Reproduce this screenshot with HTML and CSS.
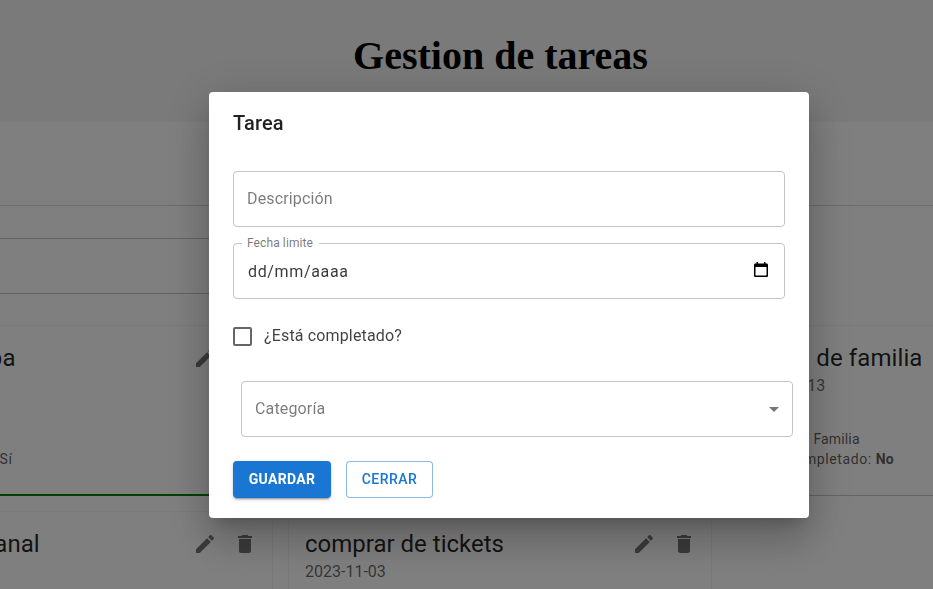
FILE: index.html
```html
<!DOCTYPE html>
<html lang="es">
<head>
<meta charset="utf-8">
<title>Gestion de tareas</title>
<link rel="stylesheet" href="styles.css">
</head>
<body>
<div class="page">
  <header class="top"><h1>Gestion de tareas</h1></header>
  <section class="filters"></section>
  <section class="filter-box"></section>
  <main class="grid">
    <article class="card card-done">
      <div class="card-head">
        <div><h2>Comprar ropa</h2><p class="date">2023-11-01</p></div>
        <div class="actions">
          <svg viewBox="0 0 24 24"><path d="M3 17.25V21h3.75L17.81 9.94l-3.75-3.75L3 17.25zM20.71 7.04c.39-.39.39-1.02 0-1.41l-2.34-2.34c-.39-.39-1.02-.39-1.41 0l-1.83 1.83 3.75 3.75 1.83-1.83z"/></svg>
          <svg viewBox="0 0 24 24"><path d="M6 19c0 1.1.9 2 2 2h8c1.1 0 2-.9 2-2V7H6v12zM19 4h-3.5l-1-1h-5l-1 1H5v2h14V4z"/></svg>
        </div>
      </div>
      <p class="meta">Categoría: Personal</p>
      <p class="meta meta-status">¿Está Completado: Sí</p>
    </article>
    <article class="card card-plain">
      <div class="card-head">
        <div><h2>comprar juguetes</h2><p class="date">2023-11-02</p></div>
        <div class="actions">
          <svg viewBox="0 0 24 24"><path d="M3 17.25V21h3.75L17.81 9.94l-3.75-3.75L3 17.25zM20.71 7.04c.39-.39.39-1.02 0-1.41l-2.34-2.34c-.39-.39-1.02-.39-1.41 0l-1.83 1.83 3.75 3.75 1.83-1.83z"/></svg>
          <svg viewBox="0 0 24 24"><path d="M6 19c0 1.1.9 2 2 2h8c1.1 0 2-.9 2-2V7H6v12zM19 4h-3.5l-1-1h-5l-1 1H5v2h14V4z"/></svg>
        </div>
      </div>
      <p class="meta">Categoría: Familia</p>
      <p class="meta meta-status">¿Está Completado: <b>No</b></p>
    </article>
    <article class="card card-plain">
      <div class="card-head">
        <div><h2>Fiesta de familia</h2><p class="date">2023-11-13</p></div>
        <div class="actions">
          <svg viewBox="0 0 24 24"><path d="M3 17.25V21h3.75L17.81 9.94l-3.75-3.75L3 17.25zM20.71 7.04c.39-.39.39-1.02 0-1.41l-2.34-2.34c-.39-.39-1.02-.39-1.41 0l-1.83 1.83 3.75 3.75 1.83-1.83z"/></svg>
          <svg viewBox="0 0 24 24"><path d="M6 19c0 1.1.9 2 2 2h8c1.1 0 2-.9 2-2V7H6v12zM19 4h-3.5l-1-1h-5l-1 1H5v2h14V4z"/></svg>
        </div>
      </div>
      <p class="meta">Categoría: Familia</p>
      <p class="meta meta-status">¿Está Completado: <b>No</b></p>
    </article>
    <article class="card">
      <div class="card-head">
        <div><h2>Cobros semanal</h2><p class="date">2023-11-03</p></div>
        <div class="actions">
          <svg viewBox="0 0 24 24"><path d="M3 17.25V21h3.75L17.81 9.94l-3.75-3.75L3 17.25zM20.71 7.04c.39-.39.39-1.02 0-1.41l-2.34-2.34c-.39-.39-1.02-.39-1.41 0l-1.83 1.83 3.75 3.75 1.83-1.83z"/></svg>
          <svg viewBox="0 0 24 24"><path d="M6 19c0 1.1.9 2 2 2h8c1.1 0 2-.9 2-2V7H6v12zM19 4h-3.5l-1-1h-5l-1 1H5v2h14V4z"/></svg>
        </div>
      </div>
    </article>
    <article class="card">
      <div class="card-head">
        <div><h2>comprar de tickets</h2><p class="date">2023-11-03</p></div>
        <div class="actions">
          <svg viewBox="0 0 24 24"><path d="M3 17.25V21h3.75L17.81 9.94l-3.75-3.75L3 17.25zM20.71 7.04c.39-.39.39-1.02 0-1.41l-2.34-2.34c-.39-.39-1.02-.39-1.41 0l-1.83 1.83 3.75 3.75 1.83-1.83z"/></svg>
          <svg viewBox="0 0 24 24"><path d="M6 19c0 1.1.9 2 2 2h8c1.1 0 2-.9 2-2V7H6v12zM19 4h-3.5l-1-1h-5l-1 1H5v2h14V4z"/></svg>
        </div>
      </div>
    </article>
  </main>
</div>

<div class="overlay">
  <div class="dialog" role="dialog">
    <h3 class="dialog-title">Tarea</h3>
    <div class="dialog-body">
      <div class="field"><span class="placeholder">Descripción</span></div>
      <div class="field field-date">
        <span class="legend">Fecha limite</span>
        <span class="value">dd/mm/aaaa</span>
        <svg class="calendar" viewBox="0.5 0 14 15"><path d="M3 0h1.5v1.5h6V0H12v1.5h1.2c.7 0 1.3.6 1.3 1.3v10.9c0 .7-.6 1.3-1.3 1.3H1.8c-.7 0-1.3-.6-1.3-1.3V2.8c0-.7.6-1.3 1.3-1.3H3V0zM2 5v8.5h11V5H2z"/></svg>
      </div>
      <label class="check"><span class="box"></span><span>¿Está completado?</span></label>
      <div class="field field-select">
        <span class="placeholder">Categoría</span>
        <span class="caret"></span>
      </div>
    </div>
    <div class="dialog-actions">
      <button class="btn btn-primary">GUARDAR</button>
      <button class="btn btn-outline">CERRAR</button>
    </div>
  </div>
</div>
</body>
</html>
```
FILE: styles.css
```css
html, body {
  margin: 0;
  height: 100%;
  overflow: hidden;
}
body {
  background: #fff;
  font-family: Roboto, "Liberation Sans", sans-serif;
}
.page {
  width: 1001px;
  height: 589px;
}
.top {
  height: 122px;
  background: #f4f4f4;
  display: flex;
  justify-content: center;
  padding-top: 33px;
  box-sizing: border-box;
}
.top h1 {
  margin: 0;
  font-family: "Liberation Serif", serif;
  font-size: 40px;
  line-height: 46px;
  font-weight: 700;
  color: #000;
}
.filters {
  height: 84px;
  box-sizing: border-box;
  border-bottom: 1px solid #d8d8d8;
  width: 933px;
}
.filter-box {
  margin-top: 32px;
  height: 56px;
  width: 700px;
  border-top: 1px solid #c4c4c4;
  border-bottom: 1px solid #c4c4c4;
  box-sizing: border-box;
}
.grid {
  margin-top: 31px;
  display: flex;
  flex-wrap: wrap;
  width: 1303px;
  margin-left: -151.5px;
  gap: 15px 15.5px;
}
.card {
  width: 424px;
  box-sizing: border-box;
  padding: 16px 7px 0 16px;
  height: 171px;
  border: 1px solid #f4f4f4;
  background: #fff;
}
.card-done { border-bottom: 2px solid #008000; }
.card-plain { border-bottom: 1px solid #c8c8c8; }
.card-done h2 { letter-spacing: .3px; }
.card-plain h2 { letter-spacing: .1px; }
.card-head {
  display: flex;
  justify-content: space-between;
  align-items: flex-start;
}
h2 {
  margin: 0;
  font-size: 24px;
  line-height: 32px;
  font-weight: 400;
  color: rgba(0,0,0,.87);
}
.date {
  margin: 0;
  font-size: 16px;
  line-height: 24px;
  color: rgba(0,0,0,.6);
}
.actions {
  display: flex;
  width: 80px;
  padding-top: 4px;
}
.actions svg {
  width: 24px;
  height: 24px;
  padding: 0 8px;
  fill: rgba(0,0,0,.54);
}
.meta {
  margin: 0;
  font-size: 14px;
  line-height: 20px;
  letter-spacing: .15px;
  color: rgba(0,0,0,.65);
}
.meta-status { letter-spacing: .6px; }
.card-done .meta-status { letter-spacing: .75px; }
.meta b { letter-spacing: .15px; }
.card-head + .meta { margin-top: 31px; }

.overlay {
  position: fixed;
  inset: 0;
  background: rgba(0,0,0,.5);
}
.dialog {
  position: absolute;
  left: 209px;
  top: 92px;
  width: 600px;
  height: 426px;
  box-sizing: border-box;
  background: #fff;
  border-radius: 4px;
  box-shadow: 0 11px 15px -7px rgba(0,0,0,.2), 0 24px 38px 3px rgba(0,0,0,.14), 0 9px 46px 8px rgba(0,0,0,.12);
}
.dialog-title {
  margin: 0;
  padding: 15px 24px 16px;
  font-size: 20px;
  line-height: 32px;
  font-weight: 500;
  letter-spacing: .15px;
  color: rgba(0,0,0,.87);
}
.dialog-body {
  padding: 16px 24px 0;
}
.field {
  position: relative;
  box-sizing: border-box;
  height: 56px;
  width: 552px;
  border: 1px solid #c4c4c4;
  border-radius: 4px;
  display: flex;
  align-items: center;
  padding: 0 13px;
  font-size: 16px;
}
.field-date { margin-top: 16px; }
.placeholder {
  padding-bottom: 2px;
  color: rgba(0,0,0,.52);
  letter-spacing: .15px;
}
.value {
  padding-left: 1px;
  color: rgba(0,0,0,.78);
  letter-spacing: .65px;
}
.legend {
  position: absolute;
  left: 8px;
  top: -8px;
  padding: 0 6px 0 5px;
  background: #fff;
  font-size: 12px;
  line-height: 14px;
  letter-spacing: .1px;
  color: rgba(0,0,0,.55);
}
.calendar {
  position: absolute;
  right: 16px;
  top: 18px;
  width: 14px;
  height: 15px;
}
.check {
  display: flex;
  align-items: center;
  gap: 12px;
  margin-top: 27px;
  font-size: 16px;
  line-height: 20px;
  color: rgba(0,0,0,.75);
  letter-spacing: .15px;
}
.box {
  width: 15px;
  height: 15px;
  border: 2px solid rgba(0,0,0,.6);
  border-radius: 2px;
}
.field-select {
  margin: 35px 0 0 8px;
}
.caret {
  position: absolute;
  right: 13px;
  top: 25px;
  width: 0;
  height: 0;
  border-left: 5px solid transparent;
  border-right: 5px solid transparent;
  border-top: 5px solid rgba(0,0,0,.54);
}
.dialog-actions {
  display: flex;
  gap: 15px;
  padding: 24px 24px 0;
}
.btn {
  box-sizing: border-box;
  height: 37px;
  padding: 0 0 2px;
  font-family: inherit;
  font-size: 14px;
  font-weight: 700;
  letter-spacing: .3px;
  border-radius: 4px;
  cursor: pointer;
}
.btn-primary {
  width: 98px;
  color: #fff;
  background: #1976d2;
  border: none;
  box-shadow: 0 3px 1px -2px rgba(0,0,0,.2), 0 2px 2px 0 rgba(0,0,0,.14), 0 1px 5px 0 rgba(0,0,0,.12);
}
.btn-outline {
  width: 87px;
  color: #1976d2;
  font-weight: 500;
  letter-spacing: .45px;
  background: #fff;
  border: 1px solid rgba(25,118,210,.5);
}
```
